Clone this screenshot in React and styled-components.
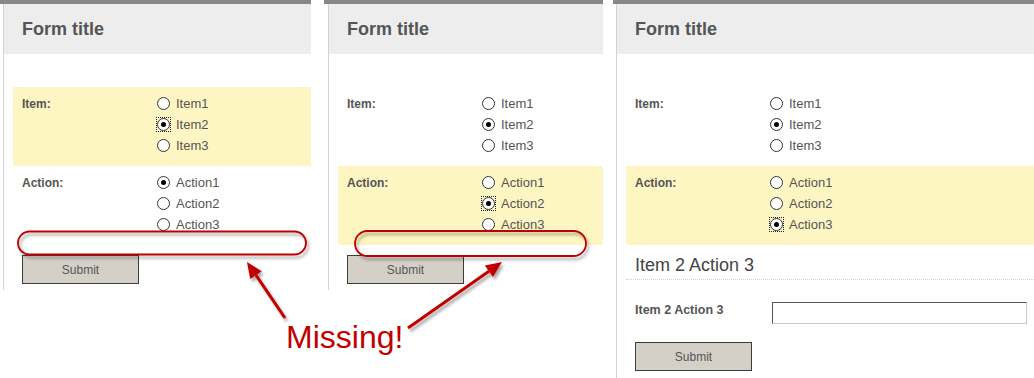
import React from 'react';
import styled, { createGlobalStyle } from 'styled-components';

const GlobalStyle = createGlobalStyle`
  body {
    margin: 0;
    background: #fff;
    font-family: "Liberation Sans", Arial, sans-serif;
  }
`;

const Page = styled.div`
  position: relative;
  width: 1034px;
  height: 378px;
  overflow: hidden;
  background: #fff;
`;

const PanelRow = styled.div`
  display: flex;
  align-items: flex-start;
`;

const Panel = styled.div`
  display: flex;
  flex-direction: column;
  width: ${(p) => p.$width}px;
  height: ${(p) => p.$height}px;
  margin-left: ${(p) => p.$offset}px;
  flex-shrink: 0;
`;

const TopBar = styled.div`
  height: 4px;
  background: #878787;
`;

const Body = styled.div`
  flex: 1;
  margin-left: ${(p) => p.$inset}px;
  border-left: 1px solid #d2d2d2;
`;

const Header = styled.div`
  height: 50px;
  background: #ededed;
  padding-left: 18px;
  display: flex;
  align-items: center;
`;

const Title = styled.h2`
  margin: 0;
  font-size: 18px;
  font-weight: bold;
  color: #555;
`;

const Fields = styled.div`
  margin-top: 33px;
`;

const FieldRow = styled.div`
  display: grid;
  grid-template-columns: 134px 1fr;
  margin-left: 9px;
  padding: 6px 0 10px 9px;
  height: 79px;
  box-sizing: border-box;
  background: ${(p) => (p.$highlight ? '#fdf6c2' : 'transparent')};
`;

const Label = styled.div`
  font-size: 12px;
  font-weight: bold;
  color: #555;
  line-height: 21px;
  padding-top: 1px;
`;

const OptionList = styled.div`
  display: flex;
  flex-direction: column;
`;

const Option = styled.div`
  display: flex;
  align-items: center;
  height: 21px;
  font-size: 13px;
  color: #555;
`;

const RadioBox = styled.span`
  display: inline-flex;
  align-items: center;
  justify-content: center;
  width: 13px;
  height: 13px;
  margin-right: 5px;
  border: 1px dotted ${(p) => (p.$focused ? '#222' : 'transparent')};
`;

const RadioCircle = styled.span`
  display: inline-flex;
  align-items: center;
  justify-content: center;
  width: 11px;
  height: 11px;
  border: 1px solid #333;
  border-radius: 50%;
  background: #fff;

  &::after {
    content: '';
    width: 5px;
    height: 5px;
    border-radius: 50%;
    background: ${(p) => (p.$checked ? '#000' : 'transparent')};
  }
`;

const Section = styled.div`
  margin-left: 9px;
  padding: 9px 0 3px 9px;
  border-bottom: 1px dotted #cfcfcf;
  font-size: 18px;
  line-height: 22px;
  color: #444;
`;

const TextRow = styled.div`
  display: grid;
  grid-template-columns: 137px 255px;
  align-items: start;
  margin: 22px 0 0 18px;
`;

const TextLabel = styled.label`
  font-size: 12.5px;
  font-weight: bold;
  color: #555;
  line-height: 16px;
`;

const TextInput = styled.input`
  width: 255px;
  height: 22px;
  box-sizing: border-box;
  border: 1px solid;
  border-color: #555 #c8c8c8 #c8c8c8 #555;
  background: #fff;
  padding: 0 4px;
`;

const SubmitButton = styled.button`
  display: block;
  width: 117px;
  height: 29px;
  margin: ${(p) => p.$top}px 0 0 18px;
  background: #d4d0c8;
  border: 1px solid #3c3c3c;
  font-family: "Liberation Sans", Arial, sans-serif;
  font-size: 12px;
  color: #555;
`;

const Overlay = styled.svg`
  position: absolute;
  left: 0;
  top: 0;
  pointer-events: none;
`;

const Missing = styled.div`
  position: absolute;
  left: 286px;
  top: 321px;
  font-size: 32px;
  line-height: 32px;
  color: #c00000;
`;

function Radio({ label, checked, focused }) {
  return (
    <Option>
      <RadioBox $focused={focused}>
        <RadioCircle $checked={checked} />
      </RadioBox>
      {label}
    </Option>
  );
}

function RadioField({ label, options, checked, focused, highlight }) {
  return (
    <FieldRow $highlight={highlight}>
      <Label>{label}</Label>
      <OptionList>
        {options.map((o, i) => (
          <Radio key={o} label={o} checked={i === checked} focused={focused && i === checked} />
        ))}
      </OptionList>
    </FieldRow>
  );
}

const panels = [
  { width: 311, offset: 0, inset: 3, height: 290, item: 1, action: 0, active: 'item' },
  { width: 279, offset: 13, inset: 4, height: 290, item: 1, action: 1, active: 'action' },
  { width: 421, offset: 10, inset: 3, height: 378, item: 1, action: 2, active: 'action', extra: true },
];

export default function App() {
  return (
    <Page>
      <GlobalStyle />
      <PanelRow>
        {panels.map((p, idx) => (
          <Panel key={idx} $width={p.width} $height={p.height} $offset={p.offset}>
            <TopBar />
            <Body $inset={p.inset}>
              <Header>
                <Title>Form title</Title>
              </Header>
              <Fields>
                <RadioField
                  label="Item:"
                  options={['Item1', 'Item2', 'Item3']}
                  checked={p.item}
                  focused={p.active === 'item'}
                  highlight={p.active === 'item'}
                />
                <RadioField
                  label="Action:"
                  options={['Action1', 'Action2', 'Action3']}
                  checked={p.action}
                  focused={p.active === 'action'}
                  highlight={p.active === 'action'}
                />
              </Fields>
              {p.extra && (
                <>
                  <Section>Item 2 Action 3</Section>
                  <TextRow>
                    <TextLabel>Item 2 Action 3</TextLabel>
                    <TextInput type="text" />
                  </TextRow>
                </>
              )}
              <SubmitButton $top={p.extra ? 18 : 10}>Submit</SubmitButton>
            </Body>
          </Panel>
        ))}
      </PanelRow>

      <Overlay width="1034" height="378" viewBox="0 0 1034 378">
        <defs>
          <filter id="shadow" x="-10%" y="-30%" width="130%" height="190%">
            <feDropShadow dx="2" dy="3" stdDeviation="1.8" floodColor="#000" floodOpacity="0.35" />
          </filter>
        </defs>
        <g filter="url(#shadow)" stroke="#c00000" fill="none">
          <rect x="18" y="231.5" width="288" height="23" rx="11.5" strokeWidth="1.8" />
          <rect x="355" y="231" width="231" height="25" rx="12.5" strokeWidth="1.8" />
          <line x1="285" y1="318" x2="256" y2="275.2" strokeWidth="3" />
          <line x1="408" y1="328" x2="488.9" y2="271.2" strokeWidth="3" />
          <polygon points="247,262 261.8,271.3 250.2,279.1" fill="#c00000" stroke="none" />
          <polygon points="502,262 492.9,276.9 484.9,265.5" fill="#c00000" stroke="none" />
        </g>
      </Overlay>
      <Missing>Missing!</Missing>
    </Page>
  );
}
